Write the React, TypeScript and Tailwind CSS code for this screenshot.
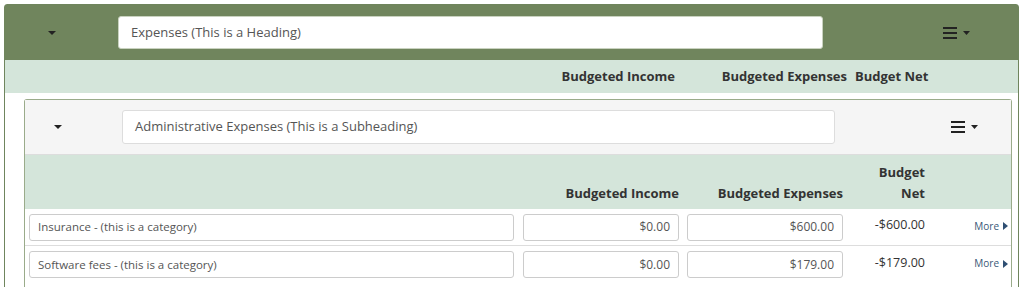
import React from "react";

const font = { fontFamily: '"Open Sans", "Noto Sans", sans-serif' };

function Caret({ className = "" }: { className?: string }) {
  return (
    <svg width="8" height="4" viewBox="0 0 8 4" className={className}>
      <path d="M0 0 L8 0 L4 4 Z" fill="#222" />
    </svg>
  );
}

function MenuIcon() {
  return (
    <div className="flex items-center gap-[6px]">
      <svg width="14" height="12" viewBox="0 0 14 12">
        <rect x="0" y="0" width="14" height="2" fill="#222" />
        <rect x="0" y="5" width="14" height="2" fill="#222" />
        <rect x="0" y="10" width="14" height="2" fill="#222" />
      </svg>
      <svg width="7" height="4" viewBox="0 0 7 4">
        <path d="M0 0 L7 0 L3.5 4 Z" fill="#222" />
      </svg>
    </div>
  );
}

const rows = [
  { name: "Insurance - (this is a category)", income: "$0.00", expenses: "$600.00", net: "-$600.00" },
  { name: "Software fees - (this is a category)", income: "$0.00", expenses: "$179.00", net: "-$179.00" },
];

export default function App() {
  return (
    <div className="w-[1024px] h-[287px] overflow-hidden bg-white pt-[4px] pl-[4px]" style={font}>
      <div className="w-[1015px] min-h-[320px] border border-[#6f855d] rounded-t-[3px]">
        {/* Heading bar */}
        <div className="h-[55px] bg-[#70855d] flex items-center">
          <div className="w-[94px] flex justify-center">
            <Caret />
          </div>
          <div className="ml-[19px] w-[705px] h-[33px] bg-white border border-[#c9d2c0] rounded-[3px] flex items-center px-[12px] text-[13px] text-[#555]">
            Expenses (This is a Heading)
          </div>
          <div className="ml-[120px] mt-[1px]">
            <MenuIcon />
          </div>
        </div>

        {/* Heading totals header */}
        <div className="h-[33px] bg-[#d4e5da] flex items-center text-[13px] font-bold text-[#333] pt-[1px]">
          <div className="w-[670px] text-right">Budgeted Income</div>
          <div className="w-[172px] text-right">Budgeted Expenses</div>
          <div className="ml-[8px]">Budget Net</div>
        </div>

        {/* Body */}
        <div className="pt-[6px] pl-[19px] pr-[6px]">
          <div className="min-h-[240px] border border-[#9aab8a] rounded-t-[3px] border-b-0">
            {/* Subheading bar */}
            <div className="h-[55px] bg-[#f5f5f5] border-b border-[#dddddd] flex items-center">
              <div className="w-[66px] flex justify-center">
                <Caret />
              </div>
              <div className="ml-[31px] w-[713px] h-[34px] bg-white border border-[#dddddd] rounded-[3px] flex items-center px-[12px] text-[13px] text-[#555]">
                Administrative Expenses (This is a Subheading)
              </div>
              <div className="ml-[116px]">
                <MenuIcon />
              </div>
            </div>

            {/* Table header */}
            <div className="h-[54px] bg-[#d4e5da] flex items-end pb-[5px] pl-[4px] text-[13px] font-bold text-[#333] leading-[21px]">
              <div className="w-[485px]" />
              <div className="ml-[9px] w-[156px] text-right">Budgeted Income</div>
              <div className="ml-[8px] w-[156px] text-right">Budgeted Expenses</div>
              <div className="w-[82px] text-right">
                Budget
                <br />
                Net
              </div>
            </div>

            {/* Category rows */}
            {rows.map((r, i) => (
              <div
                key={r.name}
                className={`h-[37px] flex items-center pl-[4px] pr-[3px] ${i === 0 ? "border-b border-[#dddddd]" : ""}`}
              >
                <div className="w-[485px] h-[27px] border border-[#cccccc] rounded-[3px] flex items-center px-[8px] text-[11.5px] text-[#555]">
                  {r.name}
                </div>
                <div className="ml-[9px] w-[156px] h-[27px] border border-[#cccccc] rounded-[3px] flex items-center justify-end px-[8px] text-[12px] text-[#555]">
                  {r.income}
                </div>
                <div className="ml-[8px] w-[156px] h-[27px] border border-[#cccccc] rounded-[3px] flex items-center justify-end px-[8px] text-[12px] text-[#555]">
                  {r.expenses}
                </div>
                <div className="w-[82px] text-right text-[12.5px] text-[#333] -mt-[3px]">{r.net}</div>
                <div className="ml-auto flex items-center gap-[4px] text-[10px] text-[#3a5878] -mt-[2px]">
                  More
                  <svg width="5" height="8" viewBox="0 0 5 8">
                    <path d="M0 0 L5 4 L0 8 Z" fill="#2f4f73" />
                  </svg>
                </div>
              </div>
            ))}
          </div>
        </div>
      </div>
    </div>
  );
}
